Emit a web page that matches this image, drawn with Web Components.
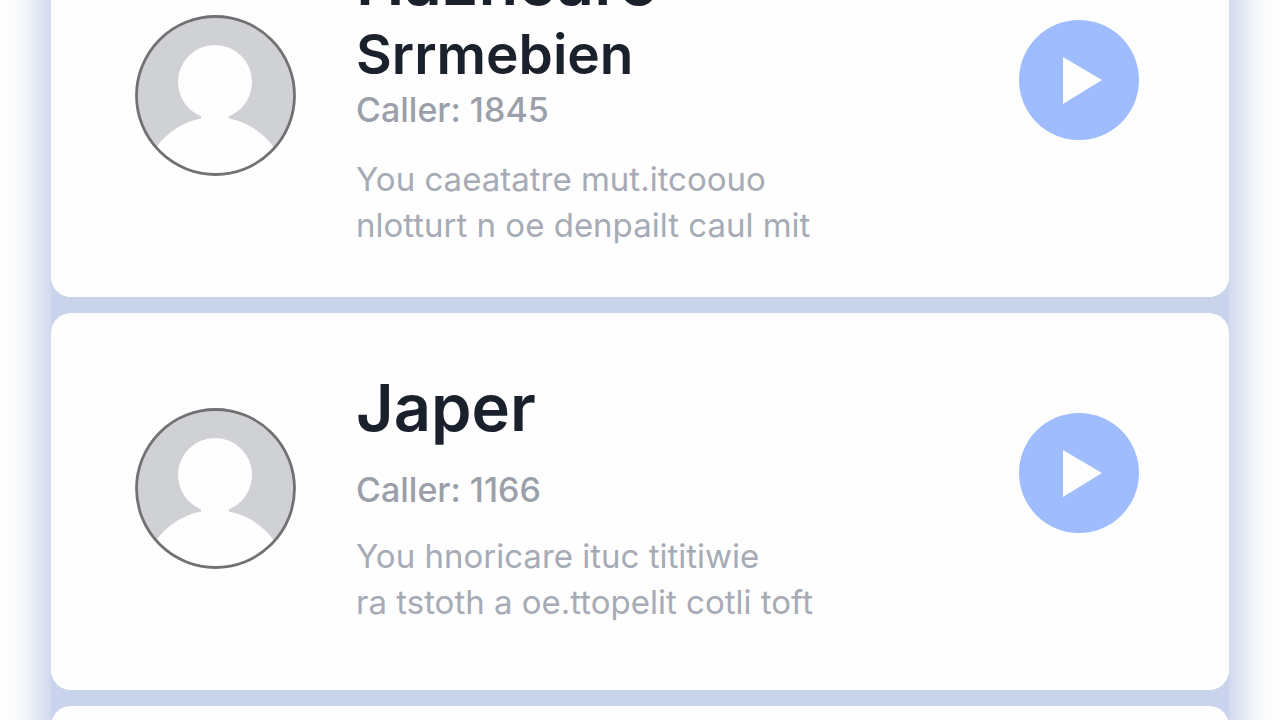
<!DOCTYPE html>
<html lang="en">
<head>
<meta charset="utf-8">
<meta name="viewport" content="width=device-width, initial-scale=1">
<title>Callers</title>
<style>
    body {
        margin: 0;
        background: #fefefe;
        font-family: Inter, "Liberation Sans", sans-serif;
    }
</style>
</head>
<body>
<caller-list>
    <caller-card compact>
        <span slot="name">Hazncare</span>
        <span slot="subname">Srrmebien</span>
        <span slot="caller">Caller: 1845</span>
        <span slot="message">You caeatatre mut.itcoouo<br>nlotturt n oe denpailt caul mit</span>
    </caller-card>
    <caller-card>
        <span slot="name">Japer</span>
        <span slot="caller">Caller: 1166</span>
        <span slot="message">You hnoricare ituc tititiwie<br>ra tstoth a oe.ttopelit cotli toft</span>
    </caller-card>
    <caller-card></caller-card>
</caller-list>

<script>
class UserAvatar extends HTMLElement {
    constructor() {
        super();
        this.attachShadow({ mode: 'open' }).innerHTML = `
            <style>
                :host {
                    display: block;
                    flex: none;
                    width: 161px;
                    height: 161px;
                }
                svg {
                    display: block;
                    width: 100%;
                    height: 100%;
                }
            </style>
            <svg viewBox="0 0 161 161" aria-hidden="true">
                <defs>
                    <clipPath id="disc"><circle cx="80.5" cy="80.5" r="79"/></clipPath>
                </defs>
                <circle cx="80.5" cy="80.5" r="79" fill="#d0d1d5"/>
                <g clip-path="url(#disc)" fill="#fefefe">
                    <circle cx="80" cy="67" r="37"/>
                    <path d="M66 98h28v12H66z"/>
                    <circle cx="80" cy="174" r="72"/>
                </g>
                <circle cx="80.5" cy="80.5" r="79" fill="none" stroke="#717174" stroke-width="2.8"/>
            </svg>
        `;
    }
}

class PlayButton extends HTMLElement {
    constructor() {
        super();
        this.attachShadow({ mode: 'open' }).innerHTML = `
            <style>
                :host {
                    display: block;
                    flex: none;
                }
                button {
                    display: block;
                    width: 120px;
                    height: 120px;
                    padding: 0;
                    border: 0;
                    border-radius: 50%;
                    background: #9ebcfe;
                    cursor: pointer;
                }
                svg {
                    display: block;
                    width: 100%;
                    height: 100%;
                }
            </style>
            <button type="button" aria-label="Play">
                <svg viewBox="0 0 120 120" aria-hidden="true">
                    <path d="M44 37L83 60L44 84z" fill="#fefefe"/>
                </svg>
            </button>
        `;
    }
}

class CallerCard extends HTMLElement {
    constructor() {
        super();
        this.attachShadow({ mode: 'open' }).innerHTML = `
            <style>
                :host {
                    display: flex;
                    align-items: flex-start;
                    gap: 60px;
                    box-sizing: border-box;
                    min-height: 377px;
                    padding: 0 90px 0 84px;
                    border-radius: 20px;
                    background: #fefefe;
                    --text-top: 61px;
                    --name-gap: 24px;
                    --caller-gap: 19px;
                }
                :host([compact]) {
                    --text-top: 28px;
                    --name-gap: 2px;
                    --caller-gap: 22px;
                }
                user-avatar {
                    margin-top: 95px;
                }
                play-button {
                    margin-top: 100px;
                }
                .text {
                    flex: 1;
                    min-width: 0;
                    padding-top: var(--text-top);
                }
                h2 {
                    display: flex;
                    flex-direction: column;
                    gap: 8px;
                    margin: 0 0 var(--name-gap);
                    font-size: 65px;
                    line-height: 68px;
                    font-weight: 600;
                    color: #1b212c;
                }
                slot[name="subname"]::slotted(*) {
                    font-size: 55px;
                    line-height: 60px;
                }
                p {
                    margin: 0;
                }
                .caller {
                    margin-bottom: var(--caller-gap);
                    font-size: 34px;
                    line-height: 48px;
                    font-weight: 500;
                    color: #9a9fa9;
                }
                .message {
                    font-size: 33px;
                    line-height: 46px;
                    color: #a6abb6;
                }
            </style>
            <user-avatar></user-avatar>
            <div class="text">
                <h2><slot name="name"></slot><slot name="subname"></slot></h2>
                <p class="caller"><slot name="caller"></slot></p>
                <p class="message"><slot name="message"></slot></p>
            </div>
            <play-button></play-button>
        `;
    }
}

class CallerList extends HTMLElement {
    constructor() {
        super();
        this.attachShadow({ mode: 'open' }).innerHTML = `
            <style>
                :host {
                    display: block;
                    height: 100vh;
                    overflow: hidden;
                }
                .list {
                    display: flex;
                    flex-direction: column;
                    gap: 16px;
                    /* the first card is partly scrolled out of view */
                    margin: -80px 51px 0;
                    border-radius: 20px;
                    background: #c9d4ec;
                    box-shadow: 0 0 30px 14px #c9d4ec;
                }
            </style>
            <div class="list"><slot></slot></div>
        `;
    }
}

customElements.define('user-avatar', UserAvatar);
customElements.define('play-button', PlayButton);
customElements.define('caller-card', CallerCard);
customElements.define('caller-list', CallerList);
</script>
</body>
</html>
